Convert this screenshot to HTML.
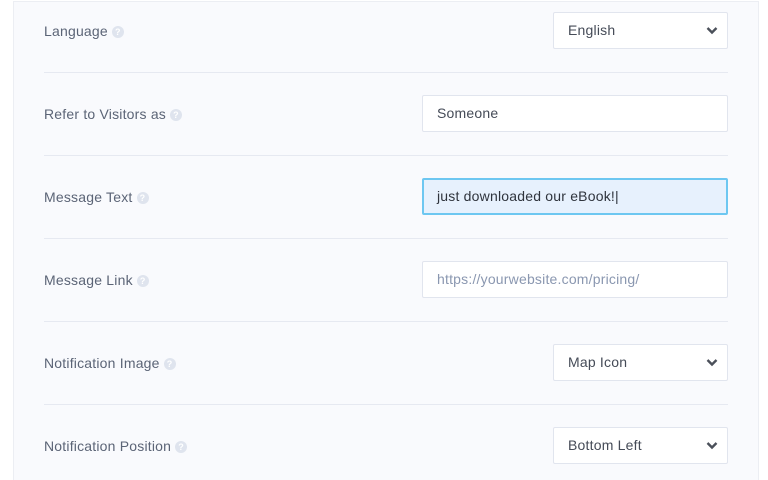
<!DOCTYPE html>
<html><head><style>
*{margin:0;padding:0;box-sizing:border-box}
html,body{width:768px;height:480px;overflow:hidden}
body{background:#fff;font-family:"Liberation Sans",sans-serif;position:relative}
.panel{position:absolute;left:13px;top:1px;width:746px;height:479px;background:#f9fafd;border:1px solid #eceef3;border-bottom:none}
.row{position:absolute;left:44px;width:684px;height:83px}
.row.div{border-bottom:1px solid #e6e9f1}
.lbl{position:absolute;left:0;font-size:14px;color:#5b6476;top:50%;transform:translateY(-50%);white-space:nowrap;letter-spacing:0.2px}
.q{display:inline-block;width:12px;height:12px;border-radius:50%;background:#dfe4ee;color:#fff;font-size:9px;text-align:center;line-height:12px;font-weight:bold;vertical-align:1px;margin-left:4px}
.box{position:absolute;right:0;height:37px;background:#fff;border:1px solid #e1e5ee;border-radius:2px;font-size:14px;color:#454b57;padding-left:14px;line-height:35px;letter-spacing:0.2px}
.sel{width:175px}
.inp{width:306px}
.chev{position:absolute;right:9px;top:13px}
</style></head><body>
<div class="panel"></div>
<div class="row div" style="top:-10px"><div class="lbl">Language<span class="q">?</span></div><div class="box sel" style="top:22px">English<svg class="chev" width="12" height="9" viewBox="0 0 12 9"><path d="M1.5 2l4.5 4.5L10.5 2" fill="none" stroke="#4b505a" stroke-width="2.4"/></svg></div></div>
<div class="row div" style="top:73px"><div class="lbl">Refer to Visitors as<span class="q">?</span></div><div class="box inp" style="top:22px">Someone</div></div>
<div class="row div" style="top:156px"><div class="lbl">Message Text<span class="q">?</span></div><div class="box inp" style="top:22px;background:#e7f1fd;border:2px solid #6dc7f1;line-height:33px;padding-left:13px;color:#2f343d">just downloaded our eBook!|</div></div>
<div class="row div" style="top:239px"><div class="lbl">Message Link<span class="q">?</span></div><div class="box inp" style="top:22px;color:#8a97b0">https://yourwebsite.com/pricing/</div></div>
<div class="row div" style="top:322px"><div class="lbl">Notification Image<span class="q">?</span></div><div class="box sel" style="top:22px">Map Icon<svg class="chev" width="12" height="9" viewBox="0 0 12 9"><path d="M1.5 2l4.5 4.5L10.5 2" fill="none" stroke="#4b505a" stroke-width="2.4"/></svg></div></div>
<div class="row" style="top:405px;height:75px"><div class="lbl" style="top:41px">Notification Position<span class="q">?</span></div><div class="box sel" style="top:22px">Bottom Left<svg class="chev" width="12" height="9" viewBox="0 0 12 9"><path d="M1.5 2l4.5 4.5L10.5 2" fill="none" stroke="#4b505a" stroke-width="2.4"/></svg></div></div>
</body></html>
